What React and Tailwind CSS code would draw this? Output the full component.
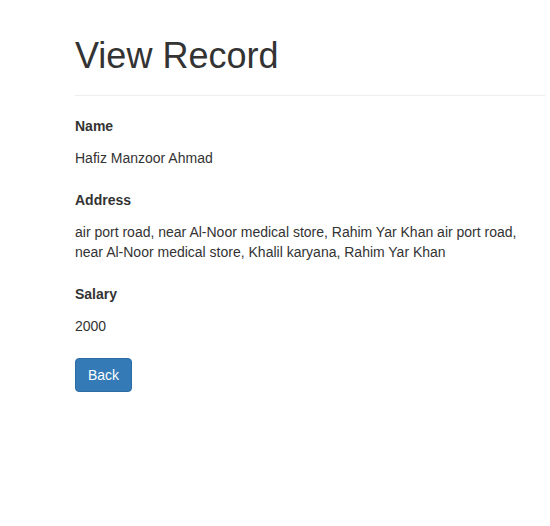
export default function App() {
  return (
    <div className="min-h-[526px] bg-white pt-[36px] pl-[75px] pr-[5px] text-[14px] leading-[20px] text-[#333] font-['Liberation_Sans',Arial,sans-serif]">
      <div className="mb-[20px] pb-[9px] border-b border-[#eee]">
        <h1 className="mb-[10px] text-[36px] leading-[39.6px] font-normal">View Record</h1>
      </div>

      <div className="mb-[15px]">
        <label className="block mb-[5px] font-bold">Name</label>
        <p className="py-[7px] min-h-[34px]">Hafiz Manzoor Ahmad</p>
      </div>

      <div className="mb-[15px]">
        <label className="block mb-[5px] font-bold">Address</label>
        <p className="py-[7px] min-h-[34px]">
          air port road, near Al-Noor medical store, Rahim Yar Khan air port road, near Al-Noor medical store, Khalil karyana, Rahim Yar Khan
        </p>
      </div>

      <div className="mb-[15px]">
        <label className="block mb-[5px] font-bold">Salary</label>
        <p className="py-[7px] min-h-[34px]">2000</p>
      </div>

      <button className="px-[12px] py-[6px] rounded-[4px] border border-[#2e6da4] bg-[#337ab7] text-white text-[14px] leading-[20px]">
        Back
      </button>
    </div>
  );
}
